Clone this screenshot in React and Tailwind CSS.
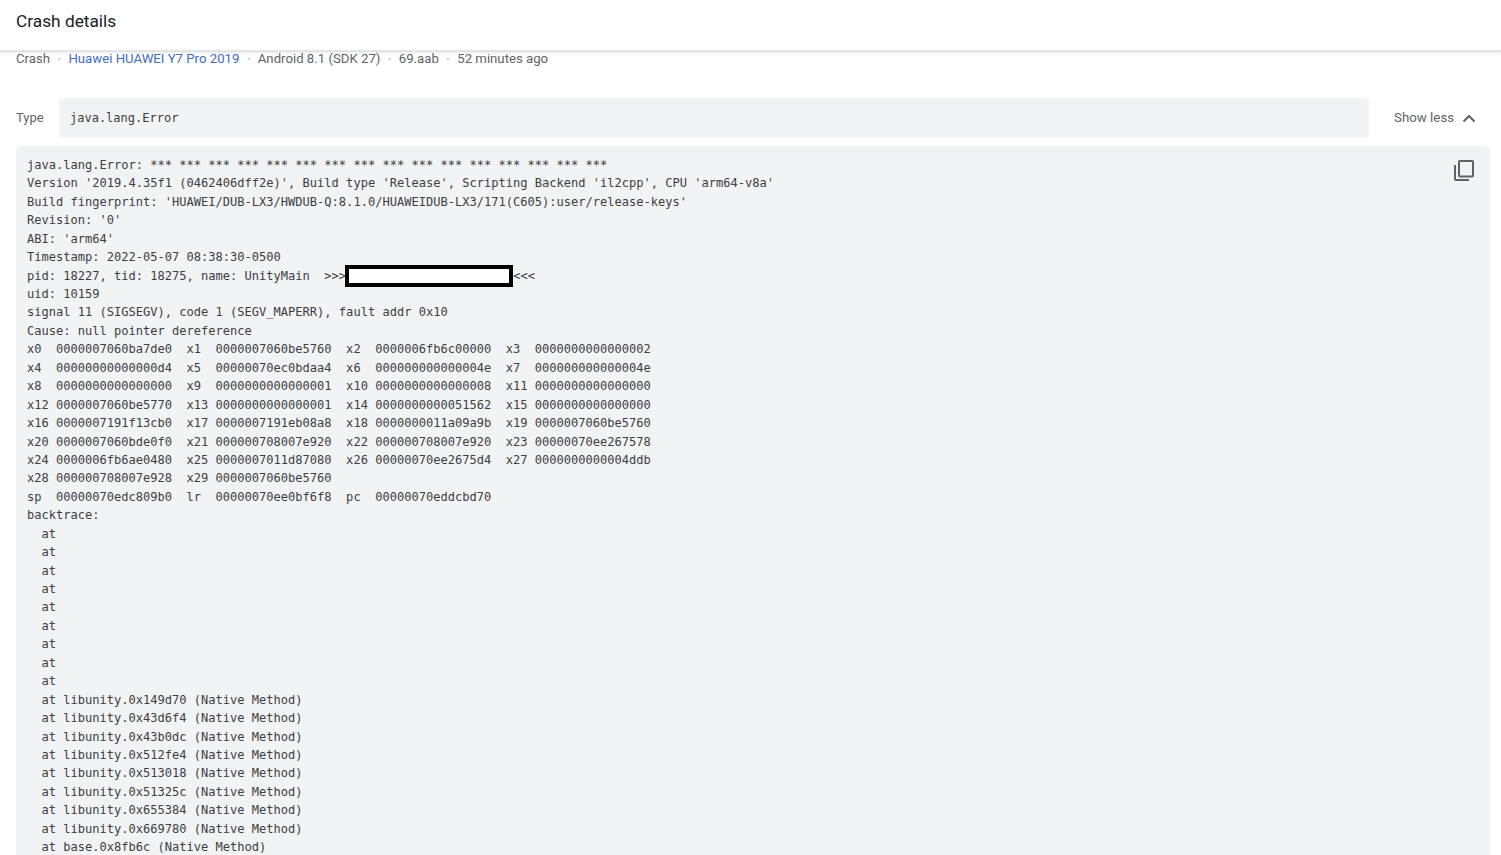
const before = [
  "java.lang.Error: *** *** *** *** *** *** *** *** *** *** *** *** *** *** *** ***",
  "Version '2019.4.35f1 (0462406dff2e)', Build type 'Release', Scripting Backend 'il2cpp', CPU 'arm64-v8a'",
  "Build fingerprint: 'HUAWEI/DUB-LX3/HWDUB-Q:8.1.0/HUAWEIDUB-LX3/171(C605):user/release-keys'",
  "Revision: '0'",
  "ABI: 'arm64'",
  "Timestamp: 2022-05-07 08:38:30-0500",
];
const after = [
  "uid: 10159",
  "signal 11 (SIGSEGV), code 1 (SEGV_MAPERR), fault addr 0x10",
  "Cause: null pointer dereference",
  "x0  0000007060ba7de0  x1  0000007060be5760  x2  0000006fb6c00000  x3  0000000000000002",
  "x4  00000000000000d4  x5  00000070ec0bdaa4  x6  000000000000004e  x7  000000000000004e",
  "x8  0000000000000000  x9  0000000000000001  x10 0000000000000008  x11 0000000000000000",
  "x12 0000007060be5770  x13 0000000000000001  x14 0000000000051562  x15 0000000000000000",
  "x16 0000007191f13cb0  x17 0000007191eb08a8  x18 0000000011a09a9b  x19 0000007060be5760",
  "x20 0000007060bde0f0  x21 000000708007e920  x22 000000708007e920  x23 00000070ee267578",
  "x24 0000006fb6ae0480  x25 0000007011d87080  x26 00000070ee2675d4  x27 0000000000004ddb",
  "x28 000000708007e928  x29 0000007060be5760",
  "sp  00000070edc809b0  lr  00000070ee0bf6f8  pc  00000070eddcbd70",
  "backtrace:",
  "  at", "  at", "  at", "  at", "  at", "  at", "  at", "  at", "  at",
  "  at libunity.0x149d70 (Native Method)",
  "  at libunity.0x43d6f4 (Native Method)",
  "  at libunity.0x43b0dc (Native Method)",
  "  at libunity.0x512fe4 (Native Method)",
  "  at libunity.0x513018 (Native Method)",
  "  at libunity.0x51325c (Native Method)",
  "  at libunity.0x655384 (Native Method)",
  "  at libunity.0x669780 (Native Method)",
  "  at base.0x8fb6c (Native Method)",
];

function Dot() {
  return <span className="mx-[7.5px] text-[#c4c7cc] text-[10px]">•</span>;
}

export default function App() {
  return (
    <div className="h-[855px] overflow-hidden bg-white font-['Roboto',sans-serif] text-[#5f6368]">
      <header className="h-[52px] border-b-2 border-[#e3e4e6] pl-4 pt-[11px] shadow-[0_1px_2px_rgba(60,64,67,0.12)]">
        <h1 className="text-[17.3px] leading-[20px] font-normal text-[#202124]">Crash details</h1>
      </header>
      <div className="px-4">
        <p className="flex h-[14px] items-center text-[13.2px] whitespace-nowrap">
          <span>Crash</span>
          <Dot />
          <span className="text-[#3f6cc4]">Huawei HUAWEI Y7 Pro 2019</span>
          <Dot />
          <span>Android 8.1 (SDK 27)</span>
          <Dot />
          <span>69.aab</span>
          <Dot />
          <span>52 minutes ago</span>
        </p>
        <div className="mt-[32px] flex h-10 items-center">
          <span className="w-[43px] text-[13px]">Type</span>
          <div className="flex h-10 w-[1310px] items-center rounded bg-[#f1f3f4] pl-[11px] font-['DejaVu_Sans_Mono',monospace] text-[12px] text-[#3c4043]">
            java.lang.Error
          </div>
          <button className="ml-[25px] flex items-center gap-[8px] text-[13.3px] text-[#5f6368]">
            Show less
            <svg width="14" height="9" viewBox="0 0 14 9" fill="none" stroke="#5f6368" strokeWidth="2">
              <path d="M1.5 7.5 7 2l5.5 5.5" />
            </svg>
          </button>
        </div>
        <div className="relative mt-2 w-[1474px] rounded bg-[#f1f3f4] pl-[11px] pt-[10px] font-['DejaVu_Sans_Mono',monospace] text-[12.06px] leading-[18.43px] whitespace-pre text-[#3c4043]">
          <button className="absolute right-[16px] top-[14px]" aria-label="Copy">
            <svg width="20" height="21" viewBox="0 0 20 21" fill="none" stroke="#5f6368" strokeWidth="2">
              <path d="M1 5v14a1 1 0 0 0 1 1h13" />
              <rect x="5" y="1" width="14" height="15.5" rx="1" />
            </svg>
          </button>
          {before.map((l, i) => <div key={i}>{l}</div>)}
          <div className="h-[18.43px]">
            {"pid: 18227, tid: 18275, name: UnityMain  >>>"}
            <span className="-my-[4px] -ml-px inline-block h-[22px] w-[168px] border-4 border-black bg-white align-middle" />
            {"<<<"}
          </div>
          {after.map((l, i) => <div key={i}>{l}</div>)}
        </div>
      </div>
    </div>
  );
}
